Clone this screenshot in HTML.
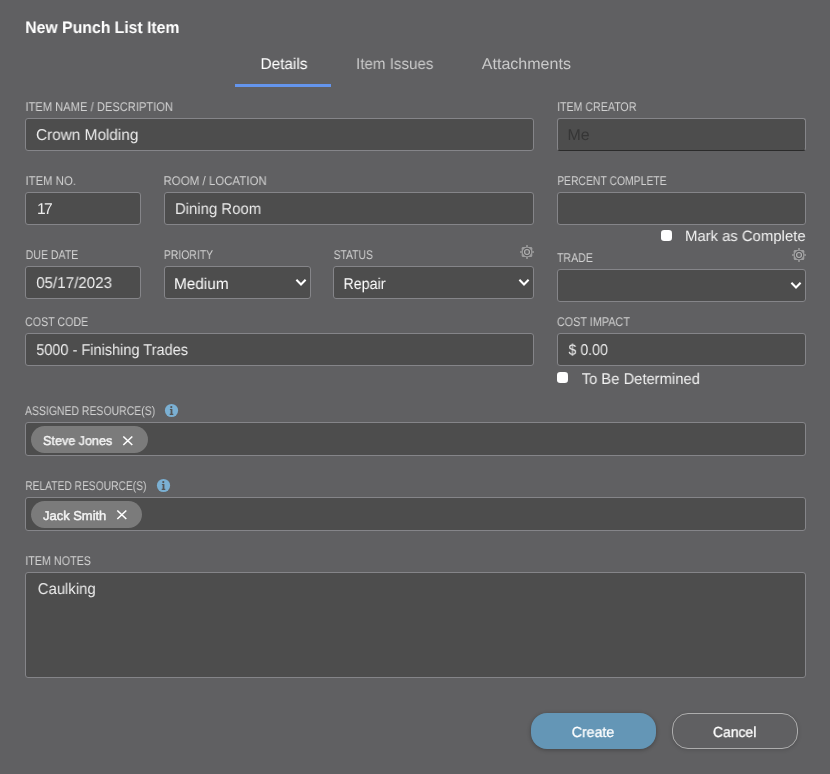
<!DOCTYPE html>
<html>
<head>
<meta charset="utf-8">
<style>
*{box-sizing:border-box;margin:0;padding:0}
html,body{width:830px;height:774px;overflow:hidden}
body{background:#606062;font-family:"Liberation Sans",sans-serif;color:#f2f2f2;position:relative}
.abs,.t,.box,.cb,.chip,.btn,svg{position:absolute;overflow:visible}
.t{white-space:nowrap;line-height:20px;transform-origin:0 50%;will-change:transform;text-rendering:geometricPrecision}
.tabline{left:235px;top:84px;width:96px;height:3px;background:#6495ed}
.box{background:#4d4d4d;border:1px solid #858589;border-radius:3px;height:33px}
.box.dis{border-bottom-color:#2b2b2b}
.cb{width:11px;height:11px;background:#fff;border-radius:3.2px}
.chip{background:#7b7b7b;border-radius:14px;height:27px}
.btn{height:36px;border-radius:16px}
</style>
</head>
<body>
<div class="abs tabline"></div>

<div class="box" style="left:25px;top:118px;width:509px"></div>
<div class="box dis" style="left:557px;top:118px;width:249px"></div>

<div class="box" style="left:25px;top:192px;width:116px"></div>
<div class="box" style="left:164px;top:192px;width:370px"></div>
<div class="box" style="left:557px;top:192px;width:249px"></div>
<div class="cb" style="left:660.6px;top:229.5px"></div>

<div class="box" style="left:25px;top:266px;width:116px"></div>
<div class="box" style="left:164px;top:266px;width:147px"></div>
<svg style="left:296px;top:279px" width="10" height="7" viewBox="0 0 10 7"><path d="M0.4 0.8 L5 5.4 L9.6 0.8" fill="none" stroke="#fff" stroke-width="2.1"/></svg>
<div class="box" style="left:333px;top:266px;width:201px"></div>
<svg style="left:519px;top:279px" width="10" height="7" viewBox="0 0 10 7"><path d="M0.4 0.8 L5 5.4 L9.6 0.8" fill="none" stroke="#fff" stroke-width="2.1"/></svg>
<div class="box" style="left:557px;top:269px;width:249px"></div>
<svg style="left:791px;top:282px" width="10" height="7" viewBox="0 0 10 7"><path d="M0.4 0.8 L5 5.4 L9.6 0.8" fill="none" stroke="#fff" stroke-width="2.1"/></svg>

<!-- gears -->
<svg style="left:519px;top:244px" width="16" height="16" viewBox="-8 -8 16 16"><g><rect x="-5.3" y="-5.1" width="10.6" height="10.2" rx="1.4" fill="#9c9c9d"/><circle r="4.2" fill="#58585a"/><circle r="3.05" fill="#b2b2b2"/><circle r="1.9" fill="#626264"/><g fill="#9e9e9e"><rect x="-0.9" y="-6.8" width="1.8" height="1.7"/><rect x="-0.9" y="5.1" width="1.8" height="1.7"/><rect x="-6.8" y="-0.9" width="1.5" height="1.8"/><rect x="5.3" y="-0.9" width="1.5" height="1.8"/></g></g></svg>
<svg style="left:791px;top:247px" width="16" height="16" viewBox="-8 -8 16 16"><g><rect x="-5.3" y="-5.1" width="10.6" height="10.2" rx="1.4" fill="#9c9c9d"/><circle r="4.2" fill="#58585a"/><circle r="3.05" fill="#b2b2b2"/><circle r="1.9" fill="#626264"/><g fill="#9e9e9e"><rect x="-0.9" y="-6.8" width="1.8" height="1.7"/><rect x="-0.9" y="5.1" width="1.8" height="1.7"/><rect x="-6.8" y="-0.9" width="1.5" height="1.8"/><rect x="5.3" y="-0.9" width="1.5" height="1.8"/></g></g></svg>

<div class="box" style="left:25px;top:333px;width:509px"></div>
<div class="box" style="left:557px;top:333px;width:249px"></div>
<div class="cb" style="left:557.3px;top:372.3px"></div>

<!-- info icons -->
<svg style="left:164px;top:403px" width="15" height="15" viewBox="-7.5 -7.5 15 15"><circle r="6.6" fill="#7bb0d3"/><circle cx="-0.2" cy="-3.4" r="1.1" fill="#555"/><path d="M-1.6 -1.6 H0.9 V3.2 H1.8 V4.4 H-1.8 V3.2 H-0.9 V-0.4 H-1.6 Z" fill="#555"/></svg>
<svg style="left:156px;top:478px" width="15" height="15" viewBox="-7.5 -7.5 15 15"><circle r="6.6" fill="#7bb0d3"/><circle cx="-0.2" cy="-3.4" r="1.1" fill="#555"/><path d="M-1.6 -1.6 H0.9 V3.2 H1.8 V4.4 H-1.8 V3.2 H-0.9 V-0.4 H-1.6 Z" fill="#555"/></svg>

<div class="box" style="left:25px;top:422px;width:781px;height:34px"></div>
<div class="chip" style="left:31px;top:426px;width:117px"></div>
<svg style="left:122px;top:435px" width="12" height="12" viewBox="0 0 12 12"><path d="M1.3 1.5 L10.3 10 M10.3 1.5 L1.3 10" stroke="#fff" stroke-width="1.6" fill="none"/></svg>

<div class="box" style="left:25px;top:497px;width:781px;height:34px"></div>
<div class="chip" style="left:31px;top:501px;width:111px"></div>
<svg style="left:116px;top:509.1px" width="12" height="12" viewBox="0 0 12 12"><path d="M1.3 1.5 L10.3 10 M10.3 1.5 L1.3 10" stroke="#fff" stroke-width="1.6" fill="none"/></svg>

<div class="box" style="left:25px;top:572px;width:781px;height:106px"></div>

<div class="btn" style="left:531px;top:713px;width:125px;background:#6496b6;box-shadow:0 1px 4px rgba(0,0,0,.3)"></div>
<div class="btn" style="left:672px;top:713px;width:126px;border:1px solid #adadad;background:#606062;box-shadow:0 1px 4px rgba(0,0,0,.15)"></div>

<div class="t" style="left:25px;top:18px;padding-left:0.33px;font-size:16.6px;color:#ffffff;transform:scaleX(0.9502);font-weight:bold">New Punch List Item</div>
<div class="t" style="left:260px;top:55px;padding-left:0.40px;font-size:15.7px;color:#ffffff;transform:scaleX(0.9833)">Details</div>
<div class="t" style="left:356px;top:55px;padding-left:0.12px;font-size:15.7px;color:#c9c9c9;transform:scaleX(0.9637)">Item Issues</div>
<div class="t" style="left:481px;top:55px;padding-left:0.78px;font-size:15.7px;color:#c9c9c9;transform:scaleX(1.0222)">Attachments</div>
<div class="t" style="left:25px;top:97px;padding-left:0.43px;font-size:12.6px;color:#d1d1d1;transform:scaleX(0.8871)">ITEM NAME / DESCRIPTION</div>
<div class="t" style="left:557px;top:97px;padding-left:0.03px;font-size:12.6px;color:#d1d1d1;transform:scaleX(0.8447)">ITEM CREATOR</div>
<div class="t" style="left:25px;top:171px;padding-left:0.51px;font-size:12.6px;color:#d1d1d1;transform:scaleX(0.9013)">ITEM NO.</div>
<div class="t" style="left:163px;top:171px;padding-left:0.53px;font-size:12.6px;color:#d1d1d1;transform:scaleX(0.9130)">ROOM / LOCATION</div>
<div class="t" style="left:557px;top:171px;padding-left:0.21px;font-size:12.6px;color:#d1d1d1;transform:scaleX(0.8242)">PERCENT COMPLETE</div>
<div class="t" style="left:25px;top:245px;padding-left:0.79px;font-size:12.6px;color:#d1d1d1;transform:scaleX(0.8389)">DUE DATE</div>
<div class="t" style="left:163px;top:245px;padding-left:1.05px;font-size:12.6px;color:#d1d1d1;transform:scaleX(0.8274)">PRIORITY</div>
<div class="t" style="left:333px;top:245px;padding-left:0.66px;font-size:12.6px;color:#d1d1d1;transform:scaleX(0.8239)">STATUS</div>
<div class="t" style="left:556px;top:248px;padding-left:1.18px;font-size:12.6px;color:#d1d1d1;transform:scaleX(0.8415)">TRADE</div>
<div class="t" style="left:25px;top:312px;padding-left:0.11px;font-size:12.6px;color:#d1d1d1;transform:scaleX(0.8455)">COST CODE</div>
<div class="t" style="left:556px;top:312px;padding-left:1.03px;font-size:12.6px;color:#d1d1d1;transform:scaleX(0.8610)">COST IMPACT</div>
<div class="t" style="left:25px;top:401px;padding-left:0.00px;font-size:12.6px;color:#d1d1d1;transform:scaleX(0.8304)">ASSIGNED RESOURCE(S)</div>
<div class="t" style="left:25px;top:476px;padding-left:0.23px;font-size:12.6px;color:#d1d1d1;transform:scaleX(0.8149)">RELATED RESOURCE(S)</div>
<div class="t" style="left:25px;top:551px;padding-left:0.26px;font-size:12.6px;color:#d1d1d1;transform:scaleX(0.8539)">ITEM NOTES</div>
<div class="t" style="left:35px;top:126px;padding-left:0.90px;font-size:15.7px;color:#ececec;transform:scaleX(0.9807)">Crown Molding</div>
<div class="t" style="left:567px;top:126px;padding-left:0.44px;font-size:15.7px;color:#363636;transform:scaleX(1.0177)">Me</div>
<div class="t" style="left:36px;top:200px;padding-left:0.92px;font-size:15.7px;color:#ececec;letter-spacing:-1.746px">17</div>
<div class="t" style="left:175px;top:200px;padding-left:0.04px;font-size:15.7px;color:#ececec;transform:scaleX(0.9491)">Dining Room</div>
<div class="t" style="left:36px;top:274px;padding-left:0.13px;font-size:15.7px;color:#ececec;transform:scaleX(0.9658)">05/17/2023</div>
<div class="t" style="left:173px;top:275px;padding-left:1.02px;font-size:15.7px;color:#ffffff;transform:scaleX(0.9796)">Medium</div>
<div class="t" style="left:343px;top:275px;padding-left:0.53px;font-size:15.7px;color:#ffffff;transform:scaleX(0.9100)">Repair</div>
<div class="t" style="left:36px;top:341px;padding-left:0.16px;font-size:15.7px;color:#ececec;transform:scaleX(0.9267)">5000 - Finishing Trades</div>
<div class="t" style="left:568px;top:341px;padding-left:0.55px;font-size:15.7px;color:#ececec;transform:scaleX(0.9015)">$ 0.00</div>
<div class="t" style="left:685px;top:227px;padding-left:0.04px;font-size:15px;color:#f2f2f2;transform:scaleX(0.9898)">Mark as Complete</div>
<div class="t" style="left:581px;top:370px;padding-left:0.70px;font-size:15.5px;color:#f2f2f2;transform:scaleX(0.9524)">To Be Determined</div>
<div class="t" style="left:43px;top:431px;padding-left:0.06px;font-size:12.8px;color:#f4f4f4;transform:scaleX(0.9835);-webkit-text-stroke:0.45px #f4f4f4">Steve Jones</div>
<div class="t" style="left:42px;top:506px;padding-left:0.99px;font-size:12.8px;color:#f4f4f4;transform:scaleX(1.0118);-webkit-text-stroke:0.45px #f4f4f4">Jack Smith</div>
<div class="t" style="left:37px;top:580px;padding-left:0.85px;font-size:15.7px;color:#ececec;transform:scaleX(0.9466)">Caulking</div>
<div class="t" style="left:571px;top:723px;padding-left:0.65px;font-size:14.6px;color:#ffffff;transform:scaleX(0.9731);-webkit-text-stroke:0.3px #ffffff">Create</div>
<div class="t" style="left:712px;top:723px;padding-left:0.99px;font-size:14.6px;color:#ffffff;transform:scaleX(0.9543);-webkit-text-stroke:0.3px #ffffff">Cancel</div>
</body>
</html>
